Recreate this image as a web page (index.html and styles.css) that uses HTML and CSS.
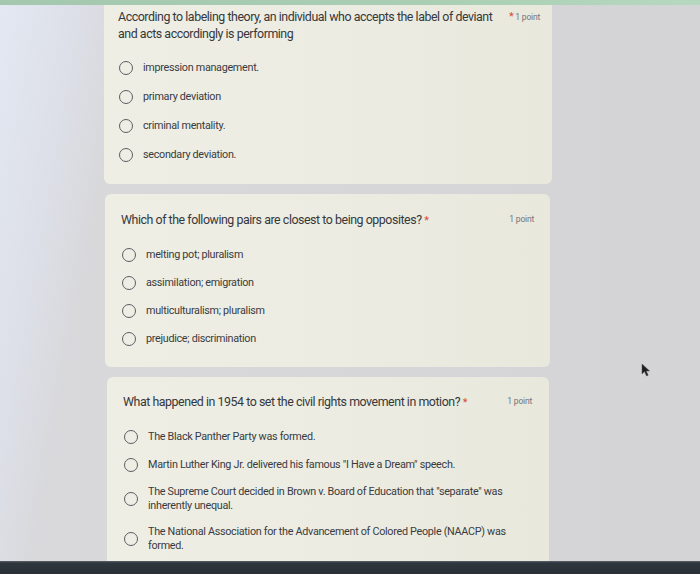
FILE: index.html
```html
<!DOCTYPE html>
<html>
<head>
<meta charset="utf-8">
<link rel="stylesheet" href="styles.css">
</head>
<body>
<div class="screen">
  <div class="topstrip"></div>
  <main class="content">
    <section class="card card-1">
      <div class="head">
        <div class="title">According to labeling theory, an individual who accepts the label of deviant and acts accordingly is performing</div>
        <div class="points"><span class="req">*</span> 1 point</div>
      </div>
      <div class="options">
        <div class="opt"><span class="radio"></span><span class="label">impression management.</span></div>
        <div class="opt"><span class="radio"></span><span class="label">primary deviation</span></div>
        <div class="opt"><span class="radio"></span><span class="label">criminal mentality.</span></div>
        <div class="opt"><span class="radio"></span><span class="label">secondary deviation.</span></div>
      </div>
    </section>
    <section class="card card-2">
      <div class="head">
        <div class="title">Which of the following pairs are closest to being opposites? <span class="req">*</span></div>
        <div class="points">1 point</div>
      </div>
      <div class="options">
        <div class="opt"><span class="radio"></span><span class="label">melting pot; pluralism</span></div>
        <div class="opt"><span class="radio"></span><span class="label">assimilation; emigration</span></div>
        <div class="opt"><span class="radio"></span><span class="label">multiculturalism; pluralism</span></div>
        <div class="opt"><span class="radio"></span><span class="label">prejudice; discrimination</span></div>
      </div>
    </section>
    <section class="card card-3">
      <div class="head">
        <div class="title">What happened in 1954 to set the civil rights movement in motion? <span class="req">*</span></div>
        <div class="points">1 point</div>
      </div>
      <div class="options">
        <div class="opt"><span class="radio"></span><span class="label">The Black Panther Party was formed.</span></div>
        <div class="opt"><span class="radio"></span><span class="label">Martin Luther King Jr. delivered his famous "I Have a Dream" speech.</span></div>
        <div class="opt"><span class="radio"></span><span class="label">The Supreme Court decided in Brown v. Board of Education that "separate" was inherently unequal.</span></div>
        <div class="opt"><span class="radio"></span><span class="label">The National Association for the Advancement of Colored People (NAACP) was formed.</span></div>
      </div>
    </section>
    <svg class="cursor" width="10" height="14" viewBox="0 0 10 14"><path d="M1 1 L1 11 L3.5 8.6 L5.6 13 L7.2 12.2 L5.2 8 L8.6 8 Z" fill="#1e1e22" stroke="#555" stroke-width="0.5"/></svg>
  </main>
  <div class="bottombar"></div>
</div>
</body>
</html>
```

FILE: styles.css
```css
* { box-sizing: border-box; }
html, body { margin: 0; padding: 0; }
body {
  width: 700px;
  height: 574px;
  overflow: hidden;
  font-family: Roboto, "Liberation Sans", Arial, sans-serif;
  color: #3b3d41;
}
.screen {
  display: flex;
  flex-direction: column;
  height: 574px;
  background:
    linear-gradient(100deg, rgba(228,233,244,0.95) 0px, rgba(222,226,236,0.7) 80px, rgba(214,214,218,0) 130px),
    linear-gradient(90deg, #d9d9dc 0%, #d6d5d8 60%, #d4d3d5 100%);
}
.topstrip {
  height: 5px;
  flex: none;
  background: linear-gradient(90deg, #a3c8ad 0%, #a9ceb3 60%, #b6d8bf 100%);
}
.content {
  flex: 1;
  position: relative;
  overflow: hidden;
  display: flex;
  flex-direction: column;
  gap: 10px;
}
.card {
  background: linear-gradient(90deg, #eeeee5 0%, #ecece2 50%, #e8e8dd 100%);
  border-radius: 6px;
  display: flex;
  flex-direction: column;
}
.card-1 {
  margin-left: 104px;
  width: 448px;
  height: 179px;
  padding: 3px 14px 0 14px;
  border-radius: 0 0 6px 6px;
}
.card-2 {
  margin-left: 105px;
  width: 445px;
  height: 173px;
  padding: 17px 16px 0 16px;
}
.card-3 {
  margin-left: 107px;
  width: 442px;
  flex: 1;
  padding: 16px 17px 0 16px;
  border-radius: 6px 6px 0 0;
}
.head {
  display: flex;
  align-items: flex-start;
  justify-content: space-between;
  gap: 8px;
}
.title {
  font-size: 12.4px;
  line-height: 17px;
  letter-spacing: -0.45px;
  color: #36383c;
  flex: 1;
}
.card-1 .title { max-width: 384px; }
.points {
  font-size: 8.5px;
  line-height: 17px;
  color: #73767c;
  letter-spacing: -0.2px;
  white-space: nowrap;
}
.card-1 .points { margin-right: -2px; }
.req { color: #d8493b; font-size: 11px; }
.options {
  display: flex;
  flex-direction: column;
}
.card-1 .options { margin-top: 11px; }
.card-2 .options { margin-top: 12px; }
.card-3 .options { margin-top: 18px; gap: 12px; }
.opt {
  display: flex;
  align-items: center;
  gap: 10px;
  height: 29px;
  padding-left: 1px;
}
.card-2 .opt { height: 28px; }
.card-3 .opt { height: auto; min-height: 16px; }
.radio {
  flex: none;
  width: 14px;
  height: 14px;
  border: 1.6px solid #5c5f63;
  border-radius: 50%;
}
.label {
  font-size: 10.8px;
  line-height: 14px;
  letter-spacing: -0.3px;
  color: #393b3f;
}
.card-3 .label { max-width: 365px; }
.cursor {
  position: absolute;
  left: 641px;
  top: 358px;
}
.bottombar {
  flex: none;
  height: 13px;
  background: linear-gradient(180deg, #5a646c 0px, #2e353c 2px, #293037 100%);
}
```
